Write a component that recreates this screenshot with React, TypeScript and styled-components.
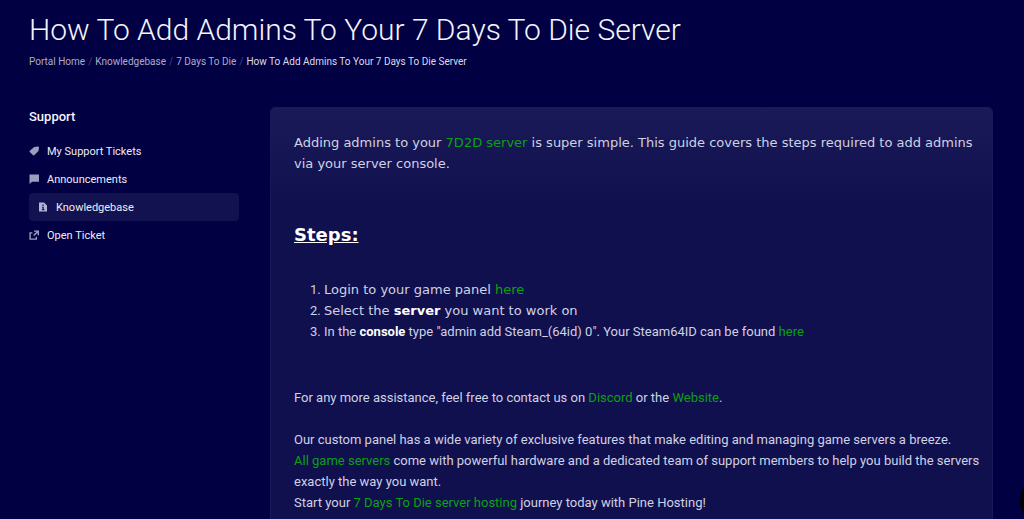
import React from "react";
import styled, { createGlobalStyle, css } from "styled-components";

const GlobalStyle = createGlobalStyle`
  *, *::before, *::after { box-sizing: border-box; }
  html { background: #000043; }
  body {
    margin: 0;
    font-family: Roboto, "Liberation Sans", sans-serif;
    font-size: 13px;
    line-height: 21px;
    color: #d0d1e2;
  }
  a { text-decoration: none; }
`;

const Page = styled.div`
  padding: 9px 31px 0 29px;
`;

const PageHeader = styled.header`
  margin-bottom: 34px;
`;

const Title = styled.h1`
  margin: 0;
  font-size: 30px;
  font-weight: 300;
  line-height: 42px;
  color: #f4f4fa;
`;

const Breadcrumb = styled.ol`
  display: flex;
  margin: 0;
  padding: 0;
  list-style: none;
  font-size: 10px;
  line-height: 22px;
`;

const Crumb = styled.li`
  color: #dcdce8;
  & + &::before {
    content: "/";
    padding: 0 3px;
    color: #44447c;
  }
`;

const CrumbLink = styled.a`
  color: #acacc8;
`;

const Layout = styled.div`
  display: grid;
  grid-template-columns: 210px minmax(0, 1fr);
  column-gap: 31px;
  align-items: start;
`;

const SideTitle = styled.h2`
  margin: 0 0 10px;
  font-size: 13px;
  font-weight: 500;
  line-height: 20px;
  color: #f4f4fa;
`;

const SideList = styled.ul`
  margin: 0;
  padding: 0;
  list-style: none;
`;

const SideLink = styled.a<{ $active?: boolean }>`
  display: flex;
  align-items: center;
  gap: 8px;
  height: 28px;
  padding: 0 ${(p) => (p.$active ? 9 : 0)}px;
  border-radius: 4px;
  font-size: 11px;
  color: #ececf5;
  ${(p) => p.$active && css`background: #121250;`}
  svg {
    width: 10px;
    height: 10px;
    fill: ${(p) => (p.$active ? "#b4b4d6" : "#9d9dc0")};
    flex: none;
  }
`;

const Card = styled.article`
  padding: 24px 12px 24px 23px;
  border: 1px solid #18185a;
  border-radius: 5px;
  background: linear-gradient(#1a1a58, #10104f 100px);
`;

const Paragraph = styled.p<{ $wide?: boolean }>`
  margin: 0 0 21px;
  ${(p) => p.$wide && css`font-family: "DejaVu Sans", sans-serif;`}
`;

const Wide = styled.span`
  font-family: "DejaVu Sans", sans-serif;
`;

const Heading = styled.h3`
  margin: 48px 0 32px;
  font-family: "DejaVu Sans", sans-serif;
  font-size: 18px;
  font-weight: 700;
  line-height: 25px;
  text-decoration: underline;
  color: #fff;
`;

const Steps = styled.ol`
  margin: 0 0 45px;
  padding-left: 30px;
`;

const Strong = styled.strong`
  color: #fff;
`;

const TextLink = styled.a`
  color: #0ba00f;
`;

const ChatButton = styled.button`
  position: fixed;
  right: -56px;
  bottom: -12px;
  width: 60px;
  height: 60px;
  padding: 0;
  border: 0;
  border-radius: 50%;
  background: #000;
`;

const TagIcon = () => (
  <svg viewBox="0 0 10 10" aria-hidden="true">
    <path d="M5.2.9 9.1.4Q10 .4 10 1.3L9.5 5.1 5.2 9.2Q4.5 9.7 3.9 9L.7 5.9Q.2 5.3.8 4.8Z" />
  </svg>
);

const SpeechIcon = () => (
  <svg viewBox="0 0 10 10" aria-hidden="true">
    <path d="M.5.6H10v7.2H3L.5 10Z" />
  </svg>
);

const DocumentIcon = () => (
  <svg viewBox="0 0 10 10" aria-hidden="true">
    <path fillRule="evenodd" d="M1 .5h5L9 3.5v6H1ZM4.3 2.5v1.3h1.5V2.5ZM3.9 4.7v.9h.6v1.7h-.8v.9h2.8v-.9h-.7V4.7Z" />
  </svg>
);

const ExternalIcon = () => (
  <svg viewBox="0 0 10 10" aria-hidden="true">
    <path d="M.4 2.3h3v1.3H1.8v4.9h4.9V6.8H8v3H.4ZM5 .4h5v4.9H8.6V2.8L5.2 6.1l-1-1L7.5 1.8H5Z" />
  </svg>
);

const sections = [
  { label: "My Support Tickets", Icon: TagIcon },
  { label: "Announcements", Icon: SpeechIcon },
  { label: "Knowledgebase", Icon: DocumentIcon, active: true },
  { label: "Open Ticket", Icon: ExternalIcon },
];

export default function App() {
  return (
    <>
      <GlobalStyle />
      <Page>
        <PageHeader>
          <Title>How To Add Admins To Your 7 Days To Die Server</Title>
          <nav aria-label="Breadcrumb">
            <Breadcrumb>
              <Crumb><CrumbLink href="#">Portal Home</CrumbLink></Crumb>
              <Crumb><CrumbLink href="#">Knowledgebase</CrumbLink></Crumb>
              <Crumb><CrumbLink href="#">7 Days To Die</CrumbLink></Crumb>
              <Crumb aria-current="page">How To Add Admins To Your 7 Days To Die Server</Crumb>
            </Breadcrumb>
          </nav>
        </PageHeader>
        <Layout>
          <nav aria-labelledby="support">
            <SideTitle id="support">Support</SideTitle>
            <SideList>
              {sections.map(({ label, Icon, active }) => (
                <li key={label}>
                  <SideLink href="#" $active={active}><Icon />{label}</SideLink>
                </li>
              ))}
            </SideList>
          </nav>
          <Card>
            <Paragraph $wide>
              Adding admins to your <TextLink href="#">7D2D server</TextLink> is super simple. This
              guide covers the steps required to add admins via your server console.
            </Paragraph>
            <Heading>Steps:</Heading>
            <Steps>
              <li><Wide>Login to your game panel <TextLink href="#">here</TextLink></Wide></li>
              <li><Wide>Select the <Strong>server</Strong> you want to work on</Wide></li>
              <li>
                In the <Strong>console</Strong> type "admin add Steam_(64id) 0". Your Steam64ID can
                be found <TextLink href="#">here</TextLink>
              </li>
            </Steps>
            <Paragraph>
              For any more assistance, feel free to contact us on{" "}
              <TextLink href="#">Discord</TextLink> or the <TextLink href="#">Website</TextLink>.
            </Paragraph>
            <Paragraph>
              Our custom panel has a wide variety of exclusive features that make editing and
              managing game servers a breeze.
              <br />
              <TextLink href="#">All game servers</TextLink> come with powerful hardware and a
              dedicated team of support members to help you build the servers exactly the way you
              want.
              <br />
              Start your <TextLink href="#">7 Days To Die server hosting</TextLink> journey today
              with Pine Hosting!
            </Paragraph>
          </Card>
        </Layout>
      </Page>
      <ChatButton aria-label="Open chat" />
    </>
  );
}
